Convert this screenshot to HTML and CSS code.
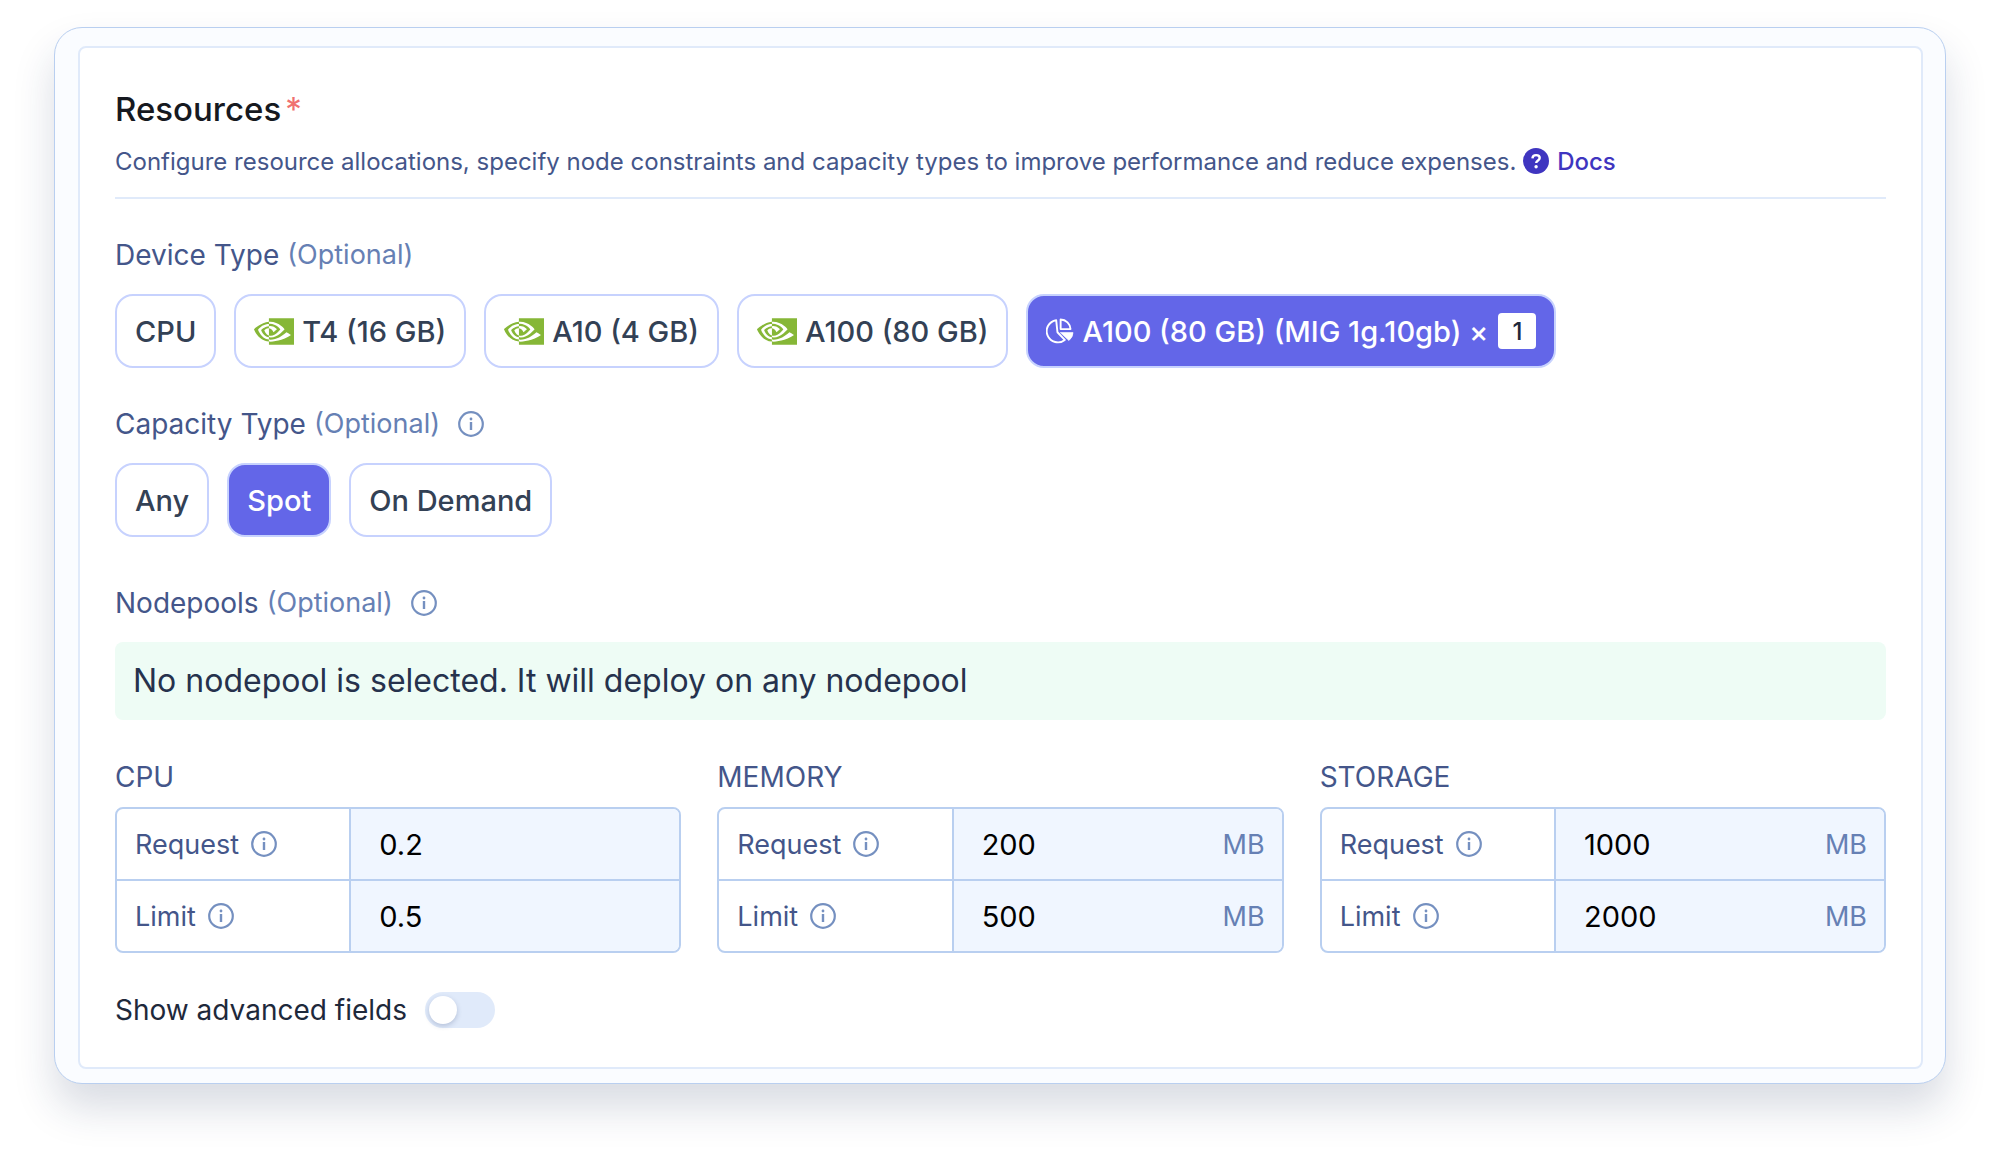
FILE: index.html
```html
<!DOCTYPE html>
<html lang="en">
<head>
  <meta charset="UTF-8">
  <title>Resources</title>
  <link rel="stylesheet" href="styles.css">
</head>
<body>

  <!-- shared icons -->
  <svg class="sprite" aria-hidden="true">
    <symbol id="info" viewBox="0 0 26 26">
      <circle cx="13" cy="13" r="11.8" fill="none" stroke="currentColor" stroke-width="2.2"/>
      <circle cx="13" cy="8" r="1.4" fill="currentColor"/>
      <path d="M13 11v8" stroke="currentColor" stroke-width="2.4"/>
    </symbol>
    <symbol id="nvidia" viewBox="0 4 24 16">
      <path fill="#86b737" d="M8.948 8.798v-1.43a6.7 6.7 0 0 1 .424-.018c3.922-.124 6.493 3.374 6.493 3.374s-2.774 3.851-5.75 3.851c-.398 0-.787-.062-1.158-.185v-4.346c1.528.185 1.837.857 2.747 2.385l2.04-1.714s-1.492-1.952-4-1.952a6.016 6.016 0 0 0-.796.035m0-4.735v2.138l.424-.027c5.45-.185 9.01 4.47 9.01 4.47s-4.08 4.964-8.33 4.964c-.37 0-.733-.035-1.095-.097v1.325c.3.035.61.062.91.062 3.957 0 6.82-2.023 9.593-4.408.459.371 2.34 1.263 2.73 1.652-2.633 2.208-8.772 3.984-12.253 3.984-.335 0-.653-.018-.971-.053v1.864H24V4.063zm0 10.326v1.131c-3.657-.654-4.673-4.46-4.673-4.46s1.758-1.944 4.673-2.262v1.237H8.94c-1.528-.186-2.73 1.245-2.73 1.245s.68 2.412 2.739 3.11M2.456 10.9s2.164-3.197 6.5-3.533V6.201C4.153 6.59 0 10.653 0 10.653s2.35 6.802 8.948 7.42v-1.237c-4.84-.6-6.492-5.936-6.492-5.936z"/>
    </symbol>
  </svg>

  <div class="frame">
    <form class="panel">
      <h2>Resources<span class="required">*</span></h2>
      <p class="description">
        Configure resource allocations, specify node constraints and capacity types to improve performance and reduce expenses.
        <a class="docs" href="#docs">
          <svg viewBox="0 0 26 26" aria-hidden="true">
            <circle cx="13" cy="13" r="13" fill="currentColor"/>
            <path d="M9.4 10.4c.2-2.2 1.7-3.3 3.7-3.3 2.1 0 3.6 1.2 3.6 3 0 2.3-3.5 2.5-3.5 4.9" fill="none" stroke="#fff" stroke-width="2.4"/>
            <circle cx="13.1" cy="18.7" r="1.7" fill="#fff"/>
          </svg>Docs</a>
      </p>

      <div class="label">Device Type <span class="optional">(Optional)</span></div>
      <div class="options">
        <button type="button" class="option">CPU</button>
        <button type="button" class="option"><svg class="nvidia"><use href="#nvidia"/></svg>T4 (16 GB)</button>
        <button type="button" class="option"><svg class="nvidia"><use href="#nvidia"/></svg>A10 (4 GB)</button>
        <button type="button" class="option"><svg class="nvidia"><use href="#nvidia"/></svg>A100 (80 GB)</button>
        <div class="option selected">
          <button type="button" class="option-name">
            <svg class="pie" viewBox="66 54 88 80" aria-hidden="true">
              <path d="M98 60A35 35 0 1 0 125 122L102 98Z" fill="none" stroke="#fff" stroke-width="6" stroke-linejoin="round"/>
              <path d="M112 58V88H143A31 31 0 0 0 112 58Z" fill="none" stroke="#fff" stroke-width="6" stroke-linejoin="round"/>
              <path d="M111 99H151Q151 113 138 124Z" fill="#fff" stroke="#fff" stroke-width="2" stroke-linejoin="round"/>
            </svg>A100 (80 GB) (MIG 1g.10gb) ×
          </button>
          <input class="count" type="text" value="1" aria-label="Device count">
        </div>
      </div>

      <div class="label">Capacity Type <span class="optional">(Optional)</span><svg class="info"><use href="#info"/></svg></div>
      <div class="options">
        <button type="button" class="option">Any</button>
        <button type="button" class="option selected">Spot</button>
        <button type="button" class="option">On Demand</button>
      </div>

      <div class="label nodepools">Nodepools <span class="optional">(Optional)</span><svg class="info"><use href="#info"/></svg></div>
      <div class="notice">No nodepool is selected. It will deploy on any nodepool</div>

      <div class="limits">
        <div>
          <h3>CPU</h3>
          <div class="box">
            <div class="row">
              <label for="cpuRequest">Request<svg class="info"><use href="#info"/></svg></label>
              <div class="field"><input id="cpuRequest" type="text" value="0.2"></div>
            </div>
            <div class="row">
              <label for="cpuLimit">Limit<svg class="info"><use href="#info"/></svg></label>
              <div class="field"><input id="cpuLimit" type="text" value="0.5"></div>
            </div>
          </div>
        </div>
        <div>
          <h3>MEMORY</h3>
          <div class="box">
            <div class="row">
              <label for="memoryRequest">Request<svg class="info"><use href="#info"/></svg></label>
              <div class="field"><input id="memoryRequest" type="text" value="200"><span>MB</span></div>
            </div>
            <div class="row">
              <label for="memoryLimit">Limit<svg class="info"><use href="#info"/></svg></label>
              <div class="field"><input id="memoryLimit" type="text" value="500"><span>MB</span></div>
            </div>
          </div>
        </div>
        <div>
          <h3>STORAGE</h3>
          <div class="box">
            <div class="row">
              <label for="storageRequest">Request<svg class="info"><use href="#info"/></svg></label>
              <div class="field"><input id="storageRequest" type="text" value="1000"><span>MB</span></div>
            </div>
            <div class="row">
              <label for="storageLimit">Limit<svg class="info"><use href="#info"/></svg></label>
              <div class="field"><input id="storageLimit" type="text" value="2000"><span>MB</span></div>
            </div>
          </div>
        </div>
      </div>

      <div class="advanced">
        <label for="advanced">Show advanced fields</label>
        <input id="advanced" class="toggle" type="checkbox">
      </div>
    </form>
  </div>

</body>
</html>
```
FILE: styles.css
```css
* {
  box-sizing: border-box;
}

body {
  margin: 0;
  padding: 27px 54px 80px;
  background-color: white;
  font-family: Inter, sans-serif;
  color: #1e293b;
}

.sprite {
  display: none;
}

.frame {
  padding: 18px 22px 14px 23px;
  background-color: #fafcff;
  border: 1px solid #b9cff0;
  border-radius: 28px;
  box-shadow: 0 24px 40px rgba(30, 50, 90, 0.17);
}

.panel {
  padding: 37px 35px 38px;
  background-color: white;
  border: 2px solid #e0eafa;
  border-radius: 8px;
}

h2 {
  margin: 0;
  font-size: 33px;
  line-height: 48px;
  font-weight: 500;
  color: #16191f;
}

.required {
  margin-left: 4px;
  color: #f07070;
  font-weight: 400;
}

.description {
  margin: 0 0 40px;
  padding: 9px 0 15px;
  border-bottom: 2px solid #e0eafa;
  font-size: 24px;
  line-height: 40px;
  color: #44568a;
}

.docs {
  color: #3f35c0;
  font-weight: 500;
  text-decoration: none;
}

.docs svg {
  width: 26px;
  height: 26px;
  margin-right: 8px;
  vertical-align: -4px;
}

.label {
  display: flex;
  align-items: center;
  gap: 8px;
  margin-bottom: 23px;
  font-size: 28px;
  line-height: 32px;
  color: #44568a;
}

.optional {
  font-size: 27px;
  color: #6680b4;
}

.info {
  width: 26px;
  height: 26px;
  color: #7590c0;
}

.label .info {
  margin-left: 10px;
}

.options {
  display: flex;
  gap: 18px;
  margin-bottom: 40px;
}

.option {
  display: flex;
  align-items: center;
  height: 74px;
  padding: 0 18px;
  border: 2px solid #c7d2fe;
  border-radius: 18px;
  background-color: white;
  font-family: inherit;
  font-size: 29px;
  font-weight: 500;
  color: #334155;
  cursor: pointer;
}

.selected {
  background-color: #6366e8;
  color: white;
}

.nvidia {
  width: 40px;
  height: 27px;
  margin-right: 8px;
}

.pie {
  width: 28px;
  height: 26px;
  margin-right: 8px;
}

.option-name {
  display: flex;
  align-items: center;
  padding: 0;
  border: none;
  background: none;
  font: inherit;
  color: inherit;
  cursor: pointer;
}

.count {
  width: 38px;
  height: 36px;
  margin-left: 10px;
  padding: 0;
  border: none;
  border-radius: 4px;
  background-color: white;
  font-family: inherit;
  font-size: 24px;
  font-weight: 500;
  text-align: center;
  color: #1e293b;
}

.nodepools {
  margin-top: 50px;
}

.notice {
  margin-bottom: 41px;
  padding: 0 18px;
  border-radius: 8px;
  background-color: #eefcf5;
  font-size: 32px;
  line-height: 78px;
  color: #26324d;
}

.limits {
  display: grid;
  grid-template-columns: repeat(3, minmax(0, 1fr));
  gap: 36px;
}

h3 {
  margin: 0 0 14px;
  font-size: 28px;
  line-height: 32px;
  font-weight: 400;
  color: #44568a;
}

.box {
  border: 2px solid #b9cff0;
  border-radius: 8px;
  overflow: hidden;
}

.row {
  display: grid;
  grid-template-columns: 5fr 7fr;
  height: 70px;
}

.row + .row {
  height: 72px;
  border-top: 2px solid #b9cff0;
}

.row label {
  display: flex;
  align-items: center;
  gap: 12px;
  padding-left: 18px;
  border-right: 2px solid #b9cff0;
  font-size: 27px;
  color: #44568a;
}

.field {
  display: flex;
  align-items: center;
  min-width: 0;
  padding: 0 17px 0 28px;
  background-color: #f0f6ff;
  font-size: 27px;
  color: #6680b4;
}

.field input {
  flex: 1;
  min-width: 0;
  padding: 0;
  border: none;
  background: none;
  font-family: inherit;
  font-size: 29px;
  color: black;
}

.advanced {
  display: flex;
  align-items: center;
  gap: 18px;
  margin-top: 38px;
  font-size: 28px;
  line-height: 38px;
}

.toggle {
  appearance: none;
  width: 70px;
  height: 36px;
  margin: 0;
  padding: 4px;
  border-radius: 18px;
  background-color: #e0eafa;
  cursor: pointer;
}

.toggle::before {
  content: "";
  display: block;
  width: 28px;
  height: 28px;
  border-radius: 50%;
  background-color: white;
  box-shadow: 0 2px 5px rgba(50, 70, 120, 0.25);
}

.toggle:checked {
  background-color: #6366e8;
}

.toggle:checked::before {
  margin-left: 34px;
}
```
